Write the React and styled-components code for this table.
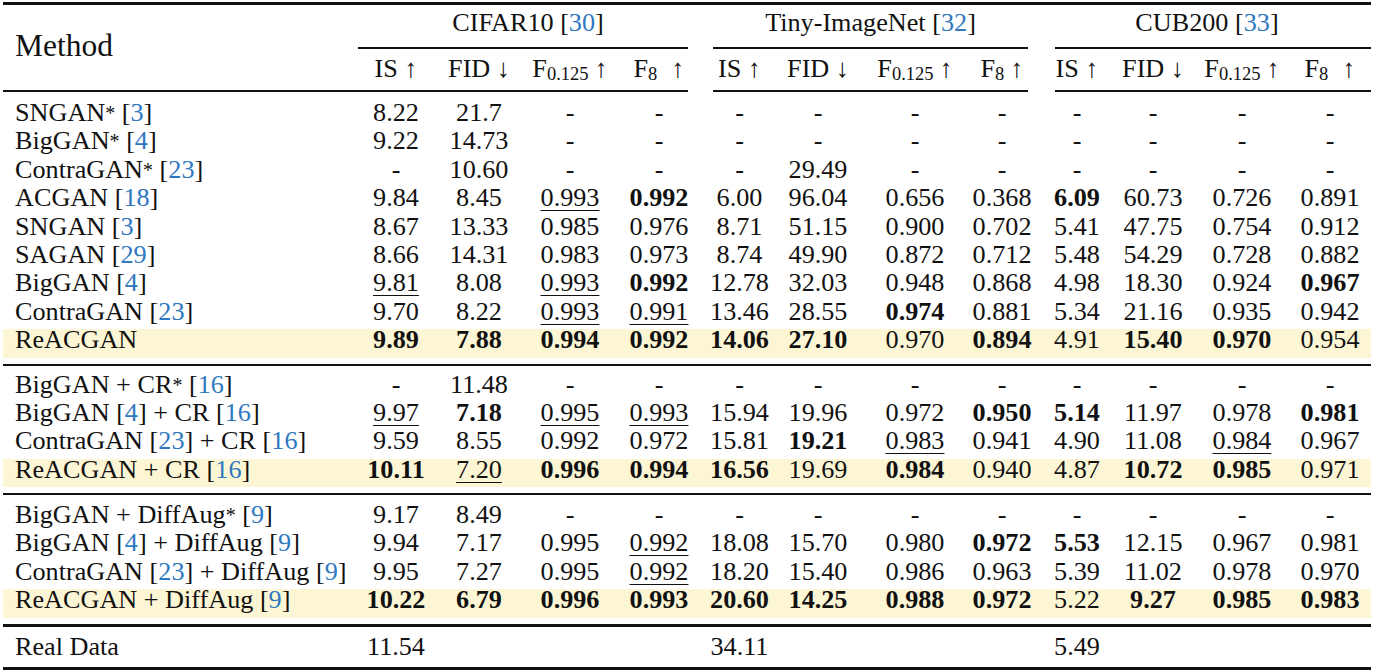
import React from "react";
import styled, { createGlobalStyle } from "styled-components";

const COLS =
  "352px 82px 84px 98px 80px 81px 76px 118px 56px 94px 58px 120px 56px 13px";

const GlobalStyle = createGlobalStyle`
  html, body {
    margin: 0;
    padding: 0;
    background: #fff;
  }
  body {
    font-family: "Liberation Serif", "Times New Roman", serif;
    color: #111;
  }
`;

const Page = styled.div`
  width: 1377px;
  height: 672px;
  padding: 2px 0 0 3px;
  box-sizing: border-box;
  overflow: hidden;
`;

const Table = styled.div`
  width: 1368px;
  font-size: 26.2px;
`;

const Rule = styled.div`
  height: ${(p) => p.$h}px;
  background: #111;
`;

const HeadGrid = styled.div`
  display: grid;
  grid-template-columns: ${COLS};
  grid-template-rows: 42px 2px 41px;
`;

const MethodHead = styled.div`
  grid-column: 1;
  grid-row: 1 / 4;
  display: flex;
  align-items: center;
  padding: 0 0 4px 12px;
  font-size: 31.5px;
  line-height: 1;
`;

const GroupTitle = styled.div`
  grid-column: ${(p) => p.$cols};
  grid-row: 1;
  margin: 0 ${(p) => p.$mr}px 0 ${(p) => p.$ml}px;
  padding: 4px ${(p) => p.$pr || 0}px 0 ${(p) => p.$pl || 0}px;
  display: flex;
  justify-content: center;
  line-height: 28.3px;
  white-space: nowrap;
`;

const Seg = styled.div`
  grid-column: ${(p) => p.$cols};
  grid-row: ${(p) => p.$row || 1};
  margin: 0 ${(p) => p.$mr}px 0 ${(p) => p.$ml}px;
  background: #111;
`;

const SubHead = styled.div`
  grid-row: 3;
  grid-column: ${(p) => p.$col};
  display: flex;
  justify-content: center;
  padding-top: 6px;
  line-height: 28.3px;
  white-space: nowrap;
`;

const Sub = styled.span`
  font-size: 18.5px;
  position: relative;
  top: 5px;
  margin-right: ${(p) => (p.$wide ? 14 : 6)}px;
`;

const RuleGrid = styled.div`
  display: grid;
  grid-template-columns: ${COLS};
  height: 2px;
`;

const Section = styled.div`
  padding: ${(p) => p.$pt}px 0 ${(p) => p.$pb}px;
`;

const Row = styled.div`
  display: grid;
  grid-template-columns: ${COLS};
  height: 28.4px;
  background: ${(p) => (p.$hl ? "#fdf6d5" : "transparent")};
`;

const Label = styled.div`
  padding-left: 12px;
  line-height: 21px;
  white-space: nowrap;
`;

const Cell = styled.div`
  display: flex;
  justify-content: center;
  line-height: 21px;
  white-space: nowrap;
`;

const Val = styled.span`
  font-weight: ${(p) => (p.$b ? 700 : 400)};
  text-decoration: ${(p) => (p.$u ? "underline" : "none")};
  text-underline-offset: 4px;
  text-decoration-thickness: 1.3px;
`;

const Cite = styled.span`
  color: #2f78c0;
`;

const Star = styled.span`
  font-size: 20px;
  position: relative;
  top: -1px;
`;

const ref = (n) => (
  <>
    [<Cite>{n}</Cite>]
  </>
);
const star = <Star>*</Star>;
const none = (k) => Array(k).fill("-");

const SECTIONS = [
  {
    pt: 10,
    pb: 6,
    rows: [
      { label: <>SNGAN{star} {ref(3)}</>, v: ["8.22", "21.7", ...none(10)] },
      { label: <>BigGAN{star} {ref(4)}</>, v: ["9.22", "14.73", ...none(10)] },
      {
        label: <>ContraGAN{star} {ref(23)}</>,
        v: ["-", "10.60", "-", "-", "-", "29.49", ...none(6)],
      },
      {
        label: <>ACGAN {ref(18)}</>,
        v: ["9.84", "8.45", "u:0.993", "b:0.992", "6.00", "96.04", "0.656", "0.368", "b:6.09", "60.73", "0.726", "0.891"],
      },
      {
        label: <>SNGAN {ref(3)}</>,
        v: ["8.67", "13.33", "0.985", "0.976", "8.71", "51.15", "0.900", "0.702", "5.41", "47.75", "0.754", "0.912"],
      },
      {
        label: <>SAGAN {ref(29)}</>,
        v: ["8.66", "14.31", "0.983", "0.973", "8.74", "49.90", "0.872", "0.712", "5.48", "54.29", "0.728", "0.882"],
      },
      {
        label: <>BigGAN {ref(4)}</>,
        v: ["u:9.81", "8.08", "u:0.993", "b:0.992", "12.78", "32.03", "0.948", "0.868", "4.98", "18.30", "0.924", "b:0.967"],
      },
      {
        label: <>ContraGAN {ref(23)}</>,
        v: ["9.70", "8.22", "u:0.993", "u:0.991", "13.46", "28.55", "b:0.974", "0.881", "5.34", "21.16", "0.935", "0.942"],
      },
      {
        label: <>ReACGAN</>,
        hl: true,
        v: ["b:9.89", "b:7.88", "b:0.994", "b:0.992", "b:14.06", "b:27.10", "0.970", "b:0.894", "4.91", "b:15.40", "b:0.970", "0.954"],
      },
    ],
  },
  {
    pt: 8,
    pb: 6,
    rows: [
      { label: <>BigGAN + CR{star} {ref(16)}</>, v: ["-", "11.48", ...none(10)] },
      {
        label: <>BigGAN {ref(4)} + CR {ref(16)}</>,
        v: ["u:9.97", "b:7.18", "u:0.995", "u:0.993", "15.94", "19.96", "0.972", "b:0.950", "b:5.14", "11.97", "0.978", "b:0.981"],
      },
      {
        label: <>ContraGAN {ref(23)} + CR {ref(16)}</>,
        v: ["9.59", "8.55", "0.992", "0.972", "15.81", "b:19.21", "u:0.983", "0.941", "4.90", "11.08", "u:0.984", "0.967"],
      },
      {
        label: <>ReACGAN + CR {ref(16)}</>,
        hl: true,
        v: ["b:10.11", "u:7.20", "b:0.996", "b:0.994", "b:16.56", "19.69", "b:0.984", "0.940", "4.87", "b:10.72", "b:0.985", "0.971"],
      },
    ],
  },
  {
    pt: 9,
    pb: 6,
    rows: [
      { label: <>BigGAN + DiffAug{star} {ref(9)}</>, v: ["9.17", "8.49", ...none(10)] },
      {
        label: <>BigGAN {ref(4)} + DiffAug {ref(9)}</>,
        v: ["9.94", "7.17", "0.995", "u:0.992", "18.08", "15.70", "0.980", "b:0.972", "b:5.53", "12.15", "0.967", "0.981"],
      },
      {
        label: <>ContraGAN {ref(23)} + DiffAug {ref(9)}</>,
        v: ["9.95", "7.27", "0.995", "u:0.992", "18.20", "15.40", "0.986", "0.963", "5.39", "11.02", "0.978", "0.970"],
      },
      {
        label: <>ReACGAN + DiffAug {ref(9)}</>,
        hl: true,
        v: ["b:10.22", "b:6.79", "b:0.996", "b:0.993", "b:20.60", "b:14.25", "b:0.988", "b:0.972", "5.22", "b:9.27", "b:0.985", "b:0.983"],
      },
    ],
  },
];

const REAL = ["11.54", "", "", "", "34.11", "", "", "", "5.49", "", "", ""];

const GROUPS = [
  { name: "CIFAR10", cite: 30, cols: "2 / 6", ml: 3, mr: 11, pl: 10 },
  { name: "Tiny-ImageNet", cite: 32, cols: "6 / 10", ml: 14, mr: 2 },
  { name: "CUB200", cite: 33, cols: "10 / 15", ml: 25, mr: 0, pr: 12 },
];

const LOWER = [
  { cols: "1 / 6", ml: 0, mr: 11 },
  { cols: "6 / 10", ml: 14, mr: 2 },
  { cols: "10 / 15", ml: 25, mr: 0 },
];

function metricHeads(wideF8) {
  return [
    <>IS ↑</>,
    <>FID ↓</>,
    <>
      F<Sub>0.125</Sub>↑
    </>,
    <>
      F<Sub $wide={wideF8}>8</Sub>↑
    </>,
  ];
}

const HEADS = [...metricHeads(true), ...metricHeads(false), ...metricHeads(true)];

function Value({ text }) {
  if (text.startsWith("b:")) return <Val $b>{text.slice(2)}</Val>;
  if (text.startsWith("u:")) return <Val $u>{text.slice(2)}</Val>;
  return <Val>{text}</Val>;
}

function DataRow({ label, values, hl }) {
  return (
    <Row $hl={hl}>
      <Label>{label}</Label>
      {values.map((v, i) => (
        <Cell key={i}>
          <Value text={v} />
        </Cell>
      ))}
    </Row>
  );
}

export default function App() {
  return (
    <Page>
      <GlobalStyle />
      <Table>
        <Rule $h={3} />
        <HeadGrid>
          <MethodHead>Method</MethodHead>
          {GROUPS.map((g) => (
            <React.Fragment key={g.name}>
              <GroupTitle $cols={g.cols} $ml={g.ml} $mr={g.mr} $pl={g.pl} $pr={g.pr}>
                {g.name}&nbsp;{ref(g.cite)}
              </GroupTitle>
              <Seg $cols={g.cols} $row={2} $ml={g.ml} $mr={g.mr} />
            </React.Fragment>
          ))}
          {HEADS.map((h, i) => (
            <SubHead key={i} $col={i + 2}>
              {h}
            </SubHead>
          ))}
        </HeadGrid>
        <RuleGrid>
          {LOWER.map((s) => (
            <Seg key={s.cols} $cols={s.cols} $ml={s.ml} $mr={s.mr} />
          ))}
        </RuleGrid>
        {SECTIONS.map((sec, si) => (
          <React.Fragment key={si}>
            <Section $pt={sec.pt} $pb={sec.pb}>
              {sec.rows.map((r, ri) => (
                <DataRow key={ri} label={r.label} values={r.v} hl={r.hl} />
              ))}
            </Section>
            <Rule $h={si === 2 ? 3 : 2} />
          </React.Fragment>
        ))}
        <Section $pt={9} $pb={3}>
          <DataRow label={<>Real Data</>} values={REAL} />
        </Section>
        <Rule $h={3} />
      </Table>
    </Page>
  );
}
